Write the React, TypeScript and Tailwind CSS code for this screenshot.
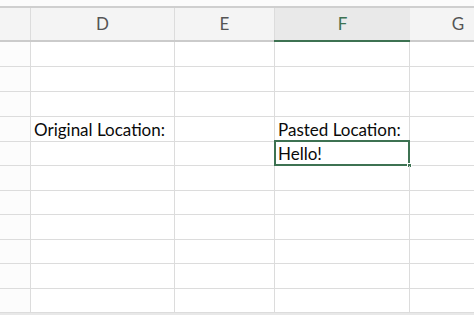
import React from "react";

const rowHeights = [25, 25, 25, 25, 24, 25, 24, 25, 24, 25, 24];

function Cell({ w, children, selected, last }: { w: string; children?: React.ReactNode; selected?: boolean; last?: boolean }) {
  return (
    <div className={`${w} relative h-full shrink-0 ${last ? "" : "border-r border-[#dcdcdc]"} flex items-center pl-[3px] pt-[1px]`}>
      {children}
      {selected && (
        <div className="absolute left-[-1px] top-[-2px] w-[136px] bottom-[-1px] border-2 border-[#3d7252] pointer-events-none">
          <div className="absolute right-[-4px] bottom-[-4px] w-[5px] h-[5px] bg-[#3d7252] border border-white" />
        </div>
      )}
    </div>
  );
}

export default function App() {
  const font = { fontFamily: 'Lato, "Open Sans", sans-serif' } as React.CSSProperties;
  return (
    <div className="w-[474px] h-[315px] overflow-hidden bg-white flex flex-col" style={font}>
      <div className="h-[6px] bg-[#fbfbfb] shrink-0" />
      <div className="h-[2px] bg-[#cfcfcf] shrink-0" />
      <div className="h-[34px] shrink-0 flex bg-[#f4f4f4] border-b-2 border-[#cbcbcb]">
        <div className="w-[31px] shrink-0 border-r border-[#dcdcdc]" />
        <div className="w-[144px] shrink-0 border-r border-[#dcdcdc] flex items-center justify-center text-[17px] text-[#555]">D</div>
        <div className="w-[100px] shrink-0 border-r border-[#dcdcdc] flex items-center justify-center text-[17px] text-[#555]">E</div>
        <div className="w-[135px] shrink-0 relative bg-[#e9e9e9] flex items-center justify-center text-[17px] text-[#3d7252]">
          F
          <div className="absolute left-[-1px] right-0 bottom-[-2px] h-[2px] bg-[#3d7252]" />
        </div>
        <div className="w-[96px] shrink-0 flex items-center justify-center text-[17px] text-[#555]">G</div>
      </div>
      {rowHeights.map((h, i) => (
        <div key={i} className="flex shrink-0 border-b border-[#dcdcdc] text-[17px] text-[#0a0a0a]" style={{ height: h }}>
          <Cell w="w-[31px] bg-[#fcfcfc]" />
          <Cell w="w-[144px]">{i === 3 ? "Original Location:" : null}</Cell>
          <Cell w="w-[100px]" />
          <Cell w="w-[135px]" selected={i === 4}>
            {i === 3 ? "Pasted Location:" : i === 4 ? "Hello!" : null}
          </Cell>
          <Cell w="w-[96px]" last />
        </div>
      ))}
      <div className="flex-1 bg-[#e8e8e8]" />
    </div>
  );
}
